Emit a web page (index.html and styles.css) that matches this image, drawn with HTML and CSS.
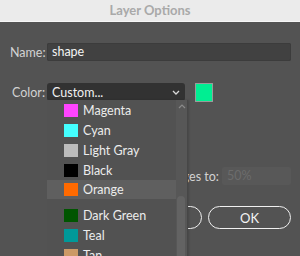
FILE: index.html
```html
<!DOCTYPE html>
<html>
<head>
<meta charset="utf-8">
<link rel="stylesheet" href="styles.css">
</head>
<body>
<div class="window">
  <div class="titlebar">Layer Options</div>
  <div class="content">
    <div class="row name-row">
      <label class="lbl">Name:</label>
      <div class="input">shape</div>
    </div>
    <div class="row color-row">
      <label class="lbl">Color:</label>
      <div class="select">
        <span>Custom...</span>
        <svg class="chev" width="8" height="5" viewBox="0 0 8 5"><path d="M1 1 L4 4 L7 1" fill="none" stroke="#d8d8d8" stroke-width="1.3"/></svg>
      </div>
      <div class="swatch-big"></div>
    </div>
    <div class="row dim-row">
      <span class="dim-lbl">Dim Images to:</span>
      <div class="dim-input">50%</div>
    </div>
    <div class="row btn-row">
      <div class="btn">Cancel</div>
      <div class="btn">OK</div>
    </div>
  </div>
  <div class="menu">
    <div class="items">
      <div class="item"><i style="background:#ff44ff"></i>Magenta</div>
      <div class="item"><i style="background:#44ffff"></i>Cyan</div>
      <div class="item"><i style="background:#bcbcbc"></i>Light Gray</div>
      <div class="item"><i style="background:#000000"></i>Black</div>
      <div class="item hl"><i style="background:#ff6a00"></i>Orange</div>
      <div class="sep"></div>
      <div class="item"><i style="background:#005500"></i>Dark Green</div>
      <div class="item"><i style="background:#009999"></i>Teal</div>
      <div class="item"><i style="background:#cc9966"></i>Tan</div>
    </div>
    <div class="scroll">
      <svg class="up" width="8" height="5" viewBox="0 0 8 5"><path d="M1 4 L4 1 L7 4" fill="none" stroke="#8a8a8a" stroke-width="1.2"/></svg>
      <div class="thumb"></div>
    </div>
  </div>
</div>
</body>
</html>
```

FILE: styles.css
```css
html, body {
  margin: 0;
  padding: 0;
}
body {
  width: 300px;
  height: 256px;
  overflow: hidden;
  background: #535353;
  font-family: Lato, "Open Sans", sans-serif;
  font-size: 12.5px;
}
.window {
  position: relative;
  width: 300px;
  height: 256px;
}
.titlebar {
  height: 22px;
  background: #ebebeb;
  border-bottom: 1px solid #f6f6f6;
  box-sizing: border-box;
  text-align: center;
  line-height: 21px;
  color: #a9a9a9;
  font-weight: bold;
  font-size: 13px;
  font-family: Lato, "Open Sans", sans-serif;
}
.content {
  padding: 21px 9px 0 10px;
  display: flex;
  flex-direction: column;
}
.row {
  display: flex;
  align-items: center;
}
.lbl {
  color: #d2d2d2;
  width: 37px;
  flex: none;
}
.name-row {
  height: 18px;
}
.input {
  flex: 1;
  height: 18px;
  background: #414141;
  border-radius: 2px;
  color: #f4f4f4;
  line-height: 18px;
  padding-left: 5px;
  box-shadow: inset 0 0 0 1px #3c3c3c;
}
.color-row {
  margin-top: 21px;
  height: 20px;
}
.color-row .lbl {
  padding-left: 2px;
  width: 35px;
}
.select {
  width: 138px;
  height: 18px;
  background: #323232;
  border-radius: 3px;
  color: #f0f0f0;
  display: flex;
  align-items: center;
  justify-content: space-between;
  padding: 0 4px 0 5px;
  box-sizing: border-box;
}
.chev {
  margin-right: 1px;
}
.swatch-big {
  width: 18px;
  height: 19px;
  margin-left: 10px;
  background: #00ee92;
  border: 1px solid #9a9a9a;
  box-sizing: border-box;
}
.dim-row {
  margin-top: 65px;
  height: 18px;
  justify-content: flex-end;
}
.dim-lbl {
  color: #d2d2d2;
  margin-right: 3px;
}
.dim-input {
  width: 69px;
  height: 18px;
  background: #585858;
  border-radius: 2px;
  color: #6c6c6c;
  line-height: 18px;
  padding-left: 5px;
  box-sizing: border-box;
}
.btn-row {
  margin-top: 21px;
  justify-content: flex-end;
  gap: 6px;
}
.btn {
  width: 83px;
  height: 23px;
  box-sizing: border-box;
  border: 1.5px solid #f0f0f0;
  border-radius: 12px;
  color: #f4f4f4;
  font-size: 13px;
  display: flex;
  align-items: center;
  justify-content: center;
}
.menu {
  position: absolute;
  left: 47px;
  top: 100px;
  width: 140px;
  height: 160px;
  background: #525252;
  display: flex;
  box-shadow: 1px 0 0 #474747, 2px 0 2px rgba(0,0,0,0.15);
  overflow: hidden;
}
.items {
  flex: 1;
}
.item {
  height: 20px;
  display: flex;
  align-items: center;
  color: #ececec;
  padding-left: 17px;
}
.item i {
  width: 14px;
  height: 13px;
  margin-right: 5px;
  flex: none;
}
.item.hl {
  background: #5f5f5f;
  height: 19px;
  margin-bottom: 1px;
}
.sep {
  height: 5px;
}
.scroll {
  width: 11px;
  background: #575757;
  position: relative;
}
.up {
  position: absolute;
  left: 2px;
  top: 4px;
}
.thumb {
  position: absolute;
  left: 1px;
  top: 96px;
  width: 8px;
  height: 80px;
  background: #636363;
  border-radius: 4px;
}
```
